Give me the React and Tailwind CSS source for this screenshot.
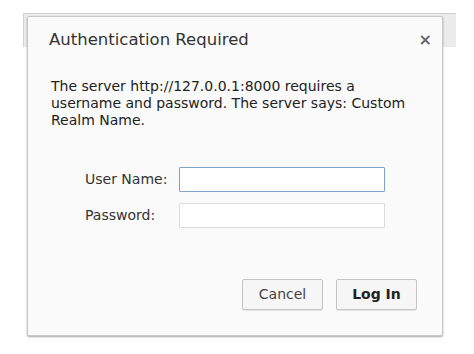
export default function App() {
  return (
    <div className="relative w-[474px] h-[354px] bg-white overflow-hidden" style={{ fontFamily: '"DejaVu Sans", sans-serif' }}>
      {/* browser chrome peeking behind the dialog */}
      <div className="absolute left-[23px] top-[13px] w-[433px] h-[34px] bg-[#ececec] border-t border-l border-[#d0d0d0]" />

      <div className="absolute left-[27px] top-[16px] w-[416px] h-[320px] bg-[#fafafa] border border-[#c8c8c8] rounded-[2px] shadow-[0_1px_2px_rgba(0,0,0,0.35)] flex flex-col">
        <div className="flex items-start justify-between pl-[21px] pr-[10px] pt-[12px]">
          <h1 className="text-[16.5px] text-[#333] leading-[22px]">Authentication Required</h1>
          <span className="text-[16px] text-[#666] font-bold leading-none mt-[3px]">×</span>
        </div>

        <p className="mt-[27px] pl-[23px] pr-[17px] text-[14px] leading-[17px] text-[#222]">
          The server http://127.0.0.1:8000 requires a username and password. The server says: Custom Realm Name.
        </p>

        <div className="mt-[38px] pl-[57px] flex flex-col gap-[11px]">
          <div className="flex items-center">
            <label className="w-[94px] text-[14px] text-[#333]">User Name:</label>
            <input className="w-[206px] h-[25px] bg-white border border-[#7ea3c8] rounded-[1px] outline-none" />
          </div>
          <div className="flex items-center">
            <label className="w-[94px] text-[14px] text-[#333]">Password:</label>
            <input type="password" className="w-[206px] h-[25px] bg-white border border-[#dcdcdc] rounded-[1px] outline-none" />
          </div>
        </div>

        <div className="mt-auto mb-[25px] pr-[25px] flex justify-end gap-[13px]">
          <button className="w-[81px] h-[31px] text-[14px] text-[#444] bg-[#f6f6f6] border border-[#c4c4c4] rounded-[2px] shadow-[0_1px_0_rgba(0,0,0,0.08)]">Cancel</button>
          <button className="w-[81px] h-[31px] text-[14px] font-bold text-[#222] bg-[#f6f6f6] border border-[#c4c4c4] rounded-[2px] shadow-[0_1px_0_rgba(0,0,0,0.08)]">Log In</button>
        </div>
      </div>
    </div>
  );
}
